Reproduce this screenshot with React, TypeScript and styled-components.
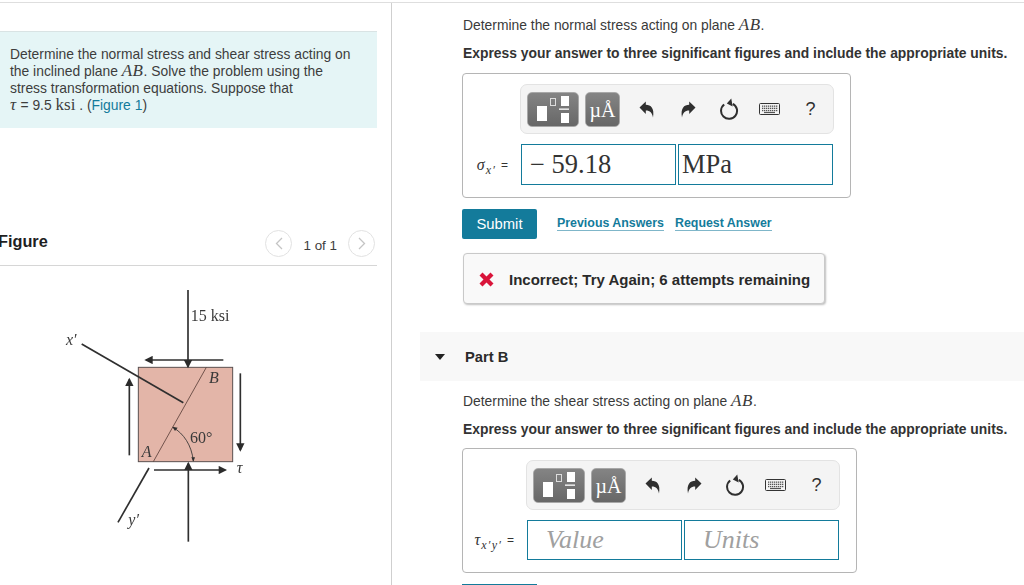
import React from "react";
import styled, { createGlobalStyle } from "styled-components";

const Global = createGlobalStyle`
  html, body { margin: 0; padding: 0; background: #fff; overflow: hidden; }
  body { font-family: "Liberation Sans", Arial, sans-serif; color: #333; }
`;

const Page = styled.div`
  display: flex;
  width: 1024px;
  height: 583px;
  margin-top: 2px;
  border-top: 1px solid #dedede;
  overflow: hidden;
`;

const LeftColumn = styled.aside`
  flex: 0 0 392px;
  box-sizing: border-box;
  border-right: 1px solid #cfcfcf;
  padding-top: 28px;
  overflow: hidden;
`;

const InfoPanel = styled.div`
  box-sizing: border-box;
  width: 377px;
  height: 97px;
  padding: 14px 20px 0 10px;
  background: #e5f5f6;
  border-top: 1px solid #d9e3e4;
  font-size: 13.86px;
  line-height: 17px;
  color: #3d3d3d;
`;

const MathText = styled.span`
  font-family: "Liberation Serif", serif;
  font-style: italic;
  font-size: 17px;
  line-height: 0;
  letter-spacing: 0.5px;
`;

const Roman = styled.span`
  font-family: "Liberation Serif", serif;
  font-size: 17px;
  line-height: 0;
`;

const InlineLink = styled.a`
  color: #137b9b;
`;

const FigureHeader = styled.div`
  box-sizing: border-box;
  display: flex;
  align-items: center;
  width: 377px;
  height: 43px;
  margin-top: 95px;
  padding-bottom: 1px;
  padding-right: 2px;
  border-bottom: 1px solid #d6d6d6;
`;

const FigureTitle = styled.h2`
  flex: 1;
  margin: -5px 0 0 -2px;
  font-size: 16.3px;
  font-weight: 700;
  color: #1f1f1f;
`;

const PagerButton = styled.span`
  box-sizing: border-box;
  display: flex;
  align-items: center;
  justify-content: center;
  width: 27px;
  height: 27px;
  border: 1px solid #e2e2e2;
  border-radius: 50%;
  svg { display: block; }
`;

const PagerLabel = styled.span`
  margin: 0 11px;
  font-size: 13.4px;
  color: #3d3d3d;
  position: relative;
  top: 2px;
`;

const FigureArt = styled.svg`
  display: block;
  margin: 14px 0 0 40px;
  filter: blur(0.35px);
`;

const RightColumn = styled.main`
  flex: 1;
  min-width: 0;
  padding-left: 71px;
  overflow: hidden;
`;

const Question = styled.p<{ $top: number }>`
  margin: ${(p) => p.$top}px 0 0;
  font-size: 13.86px;
  line-height: 17px;
  color: #3a3a3a;
`;

const Instruction = styled.p`
  margin: 11px 0 0;
  font-size: 13.88px;
  font-weight: 700;
  line-height: 17px;
  color: #333;
  white-space: nowrap;
`;

const AnswerBox = styled.section<{ $top: number; $padTop: number }>`
  width: fit-content;
  margin-top: ${(p) => p.$top}px;
  padding: ${(p) => p.$padTop}px 17px 12px 0;
  margin-left: -1px;
  border: 1px solid #b5b5b5;
  border-radius: 4px;
`;

const Toolbar = styled.div<{ $offset: number }>`
  box-sizing: border-box;
  display: flex;
  align-items: center;
  width: 314px;
  height: 50px;
  margin-left: ${(p) => p.$offset - 1}px;
  margin-right: -1px;
  padding-left: 6px;
  background: #f4f4f4;
  border: 1px solid #e3e3e3;
  border-radius: 7px;
`;

const ToolButton = styled.div<{ $width: number }>`
  box-sizing: border-box;
  flex: none;
  display: flex;
  align-items: center;
  justify-content: center;
  width: ${(p) => p.$width}px;
  height: 35px;
  margin-right: 6px;
  background: linear-gradient(#848484, #676767);
  border: 1px solid #a8a8a8;
  border-radius: 5px;
  color: #fff;
`;

const UnitGlyph = styled.span`
  font-family: "Liberation Serif", serif;
  font-size: 20px;
  line-height: 1;
  color: #fff;
  position: relative;
  top: 1px;
`;

const ToolIcon = styled.div`
  flex: none;
  display: flex;
  align-items: center;
  justify-content: center;
  width: 41px;
  height: 30px;
  color: #2f2f2f;
  font-size: 18px;
`;

const FieldRow = styled.div`
  display: flex;
  align-items: stretch;
  gap: 2px;
  margin-top: 10px;
`;

const FieldLabel = styled.div<{ $width: number }>`
  box-sizing: border-box;
  flex: 0 0 ${(p) => p.$width}px;
  display: flex;
  align-items: center;
  justify-content: flex-end;
  padding-right: 11px;
  font-size: 12px;
  color: #333;
  white-space: nowrap;
`;

const LabelMath = styled.span`
  font-family: "Liberation Serif", serif;
  font-style: italic;
  font-size: 16px;
  margin-right: 5px;
  sub { font-size: 12px; line-height: 0; letter-spacing: 1.2px; margin-left: 1px; }
`;

const Field = styled.div<{ $height: number; $placeholder?: boolean; $inset: number }>`
  box-sizing: border-box;
  display: flex;
  align-items: center;
  width: 155px;
  height: ${(p) => p.$height}px;
  padding-left: ${(p) => p.$inset}px;
  border: 1px solid #137b9b;
  font-family: "Liberation Serif", serif;
  font-size: ${(p) => (p.$placeholder ? 26 : 26.5)}px;
  font-style: ${(p) => (p.$placeholder ? "italic" : "normal")};
  color: ${(p) => (p.$placeholder ? "#a0a0a0" : "#333")};
`;

const ActionRow = styled.div`
  display: flex;
  align-items: center;
  margin: 11px 0 0 -1px;
`;

const SubmitButton = styled.button`
  box-sizing: border-box;
  width: 75px;
  height: 30px;
  padding: 0;
  border: 0;
  border-radius: 2px;
  background: #137b9b;
  color: #fff;
  font-family: inherit;
  font-size: 14.8px;
`;

const ActionLinks = styled.div`
  display: flex;
  gap: 11px;
  margin: -1px 0 0 20px;
`;

const ActionLink = styled.a`
  color: #137b9b;
  font-size: 12.4px;
  font-weight: 700;
  text-decoration: none;
  border-bottom: 1px solid #7fb6c9;
  line-height: 13px;
`;

const Feedback = styled.div`
  box-sizing: border-box;
  display: flex;
  align-items: center;
  gap: 15px;
  width: 362px;
  height: 51px;
  margin-top: 14px;
  padding: 1px 0 0 15px;
  background: #f9f9f9;
  border: 1px solid #c9c9c9;
  border-radius: 4px;
  box-shadow: 1px 1px 2px rgba(0, 0, 0, 0.25);
  font-size: 15px;
  font-weight: 700;
  color: #2a2a2a;
  white-space: nowrap;
`;

const PartBand = styled.div`
  box-sizing: border-box;
  display: flex;
  align-items: center;
  height: 49px;
  margin: 28px 0 0 -43px;
  padding-left: 15px;
  background: #f8f8f8;
  font-size: 14.7px;
  font-weight: 700;
  color: #2a2a2a;
`;

const Caret = styled.span`
  width: 0;
  height: 0;
  margin-right: 20px;
  border-left: 5.5px solid transparent;
  border-right: 5.5px solid transparent;
  border-top: 6px solid #222;
`;

const NextSubmitEdge = styled.div`
  width: 75px;
  height: 1px;
  margin-top: 11px;
  margin-left: -1px;
  background: #137b9b;
`;

const Undo = ({ flip }: { flip?: boolean }) => (
  <svg width="16" height="17" viewBox="0 0 16 17" style={flip ? { transform: "scaleX(-1)" } : undefined}>
    <path d="M.5 6.500 6.800.5v3.300c5.200 0 8.800 3.500 7.200 12.700-.9-4.300-2.800-6.900-7.200-6.900V13z" fill="#2f2f2f" />
  </svg>
);

const Reset = () => (
  <svg width="20" height="22" viewBox="0 0 20 22">
    <path d="M5.2 6.500a8 8 0 1 0 8.600-.7" fill="none" stroke="#2f2f2f" strokeWidth="2" />
    <path d="M13 1v8L7.800 5z" fill="#2f2f2f" transform="rotate(-10 10 5)" />
  </svg>
);

const Keyboard = () => (
  <svg width="21" height="12" viewBox="0 0 21 12">
    <rect x=".5" y=".5" width="20" height="11" rx="1" fill="#f4f4f4" stroke="#333" />
    {[2.5, 4.7, 6.9].map((y) =>
      [3, 5, 7, 9, 11, 13, 15, 17].map((x) => (
        <rect key={`${x}-${y}`} x={x} y={y} width="1.3" height="1.3" fill="#555" />
      ))
    )}
    <rect x="5" y="8.900" width="11" height="1.200" fill="#555" />
  </svg>
);

const Template = () => (
  <svg width="32" height="27" viewBox="0 0 32 27">
    <rect x="0" y="10" width="10" height="15" fill="#fff" />
    <rect x="13.500" y="2.500" width="5" height="7" fill="none" stroke="#ddd" />
    <rect x="24" y="0" width="8" height="10" fill="#fff" />
    <rect x="22" y="12.500" width="10" height="1.300" fill="#fff" />
    <rect x="24" y="17" width="8" height="10" fill="#fff" />
  </svg>
);

const Chevron = ({ left }: { left?: boolean }) => (
  <svg width="8" height="13" viewBox="0 0 8 13">
    <path d={left ? "M7 1 1.500 6.500 7 12" : "M1 1l5.500 5.500L1 12"} fill="none" stroke="#c4c4c4" strokeWidth="1.300" />
  </svg>
);

const EquationTools = () => (
  <>
    <ToolButton $width={52}>
      <Template />
    </ToolButton>
    <ToolButton $width={35}>
      <UnitGlyph>µÅ</UnitGlyph>
    </ToolButton>
    <ToolIcon><Undo /></ToolIcon>
    <ToolIcon><Undo flip /></ToolIcon>
    <ToolIcon><Reset /></ToolIcon>
    <ToolIcon><Keyboard /></ToolIcon>
    <ToolIcon>?</ToolIcon>
  </>
);

const Diagram = () => (
  <FigureArt width="220" height="270" viewBox="0 0 660 810">
    <defs>
      <marker id="head" viewBox="0 0 10 10" refX="8" refY="5" markerWidth="5.500" markerHeight="5" orient="auto">
        <path d="M0 0 10 5 0 10z" fill="#2b2b2b" />
      </marker>
    </defs>
    <rect x="295" y="262" width="283" height="283" fill="#e3b5a8" stroke="#5a5050" strokeWidth="3" />
    <g fill="none" stroke="#2f2f2f" strokeWidth="5">
      <path d="M444 30V260" markerEnd="url(#head)" />
      <path d="M445 785V550" markerEnd="url(#head)" />
      <path d="M550 240H318" markerEnd="url(#head)" />
      <path d="M342 570H556" markerEnd="url(#head)" />
      <path d="M268 526V298" markerEnd="url(#head)" />
      <path d="M601 280V510" markerEnd="url(#head)" />
      <path d="M125 192 430 368" />
      <path d="M327 564 234 727" />
    </g>
    <path d="M340 545 499 262" fill="none" stroke="#5a3f38" strokeWidth="2.500" />
    <path d="M400 443C430 460 455 495 460 543" fill="none" stroke="#2f2f2f" strokeWidth="2.500" />
    <path d="M397 440l16 3-8 10z" fill="#2f2f2f" />
    <path d="M460 545l-6-13h11z" fill="#2f2f2f" />
    <g fontFamily="'Liberation Serif', serif" fill="#3a3a3a" fontSize="48">
      <text x="452" y="122">15 ksi</text>
      <text x="450" y="490">60°</text>
      <text x="507" y="310" fontStyle="italic">B</text>
      <text x="305" y="532" fontStyle="italic">A</text>
      <text x="78" y="195" fontStyle="italic">x′</text>
      <text x="265" y="735" fontStyle="italic">y′</text>
      <text x="590" y="578" fontStyle="italic">τ</text>
    </g>
  </FigureArt>
);

export default function App() {
  return (
    <>
      <Global />
      <Page>
        <LeftColumn>
          <InfoPanel>
            Determine the normal stress and shear stress acting on the inclined plane <MathText>AB</MathText>. Solve the
            problem using the stress transformation equations. Suppose that
            <br />
            <MathText>τ</MathText> = 9.5 <Roman>ksi</Roman> . (<InlineLink>Figure 1</InlineLink>)
          </InfoPanel>
          <FigureHeader>
            <FigureTitle>Figure</FigureTitle>
            <PagerButton><Chevron left /></PagerButton>
            <PagerLabel>1 of 1</PagerLabel>
            <PagerButton><Chevron /></PagerButton>
          </FigureHeader>
          <Diagram />
        </LeftColumn>
        <RightColumn>
          <Question $top={14}>Determine the normal stress acting on plane <MathText>AB</MathText>.</Question>
          <Instruction>Express your answer to three significant figures and include the appropriate units.</Instruction>
          <AnswerBox $top={11} $padTop={10}>
            <Toolbar $offset={58}><EquationTools /></Toolbar>
            <FieldRow>
              <FieldLabel $width={56}><LabelMath>σ<sub>x′</sub></LabelMath>=</FieldLabel>
              <Field $height={41} $inset={8}>− 59.18</Field>
              <Field $height={41} $inset={3}>MPa</Field>
            </FieldRow>
          </AnswerBox>
          <ActionRow>
            <SubmitButton>Submit</SubmitButton>
            <ActionLinks>
              <ActionLink>Previous Answers</ActionLink>
              <ActionLink>Request Answer</ActionLink>
            </ActionLinks>
          </ActionRow>
          <Feedback>
            <svg width="15" height="15" viewBox="0 0 15 15">
              <path d="M.5 3.500 3.500.5l4 4 4-4 3 3-4 4 4 4-3 3-4-4-4 4-3-3 4-4z" fill="#d9143a" />
            </svg>
            Incorrect; Try Again; 6 attempts remaining
          </Feedback>
          <PartBand><Caret />Part B</PartBand>
          <Question $top={12}>Determine the shear stress acting on plane <MathText>AB</MathText>.</Question>
          <Instruction>Express your answer to three significant figures and include the appropriate units.</Instruction>
          <AnswerBox $top={10} $padTop={11}>
            <Toolbar $offset={64}><EquationTools /></Toolbar>
            <FieldRow>
              <FieldLabel $width={62}><LabelMath>τ<sub>x′y′</sub></LabelMath>=</FieldLabel>
              <Field $height={40} $placeholder $inset={18}>Value</Field>
              <Field $height={40} $placeholder $inset={18}>Units</Field>
            </FieldRow>
          </AnswerBox>
          <NextSubmitEdge />
        </RightColumn>
      </Page>
    </>
  );
}
